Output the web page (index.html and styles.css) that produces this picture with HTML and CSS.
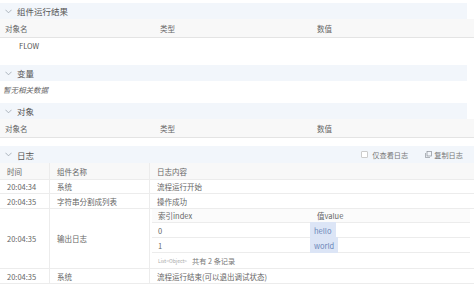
FILE: index.html
```html
<!DOCTYPE html>
<html lang="zh">
<head>
<meta charset="utf-8">
<link rel="stylesheet" href="styles.css">
</head>
<body>
<div class="panel">
  <div class="sec-head first">
    <svg class="chev" viewBox="0 0 8 5" width="7" height="5"><path d="M0.5 0.5 L4 4 L7.5 0.5" fill="none" stroke="#9aa3ad" stroke-width="0.9"/></svg>
    <span class="sec-title">组件运行结果</span>
  </div>
  <div class="otable">
    <div class="orow ohead"><span>对象名</span><span>类型</span><span>数值</span></div>
    <div class="orow obody"><span class="tree">FLOW</span><span></span><span></span></div>
  </div>

  <div class="sec-head s2">
    <svg class="chev" viewBox="0 0 8 5" width="7" height="5"><path d="M0.5 0.5 L4 4 L7.5 0.5" fill="none" stroke="#9aa3ad" stroke-width="0.9"/></svg>
    <span class="sec-title">变量</span>
  </div>
  <div class="empty">暂无相关数据</div>

  <div class="sec-head s3">
    <svg class="chev" viewBox="0 0 8 5" width="7" height="5"><path d="M0.5 0.5 L4 4 L7.5 0.5" fill="none" stroke="#9aa3ad" stroke-width="0.9"/></svg>
    <span class="sec-title">对象</span>
  </div>
  <div class="otable">
    <div class="orow ohead"><span>对象名</span><span>类型</span><span>数值</span></div>
  </div>

  <div class="sec-head s4">
    <svg class="chev" viewBox="0 0 8 5" width="7" height="5"><path d="M0.5 0.5 L4 4 L7.5 0.5" fill="none" stroke="#9aa3ad" stroke-width="0.9"/></svg>
    <span class="sec-title">日志</span>
    <span class="tools">
      <span class="tool"><span class="check"></span>仅查看日志</span>
      <span class="tool copy"><svg viewBox="0 0 8 8" width="7" height="7"><rect x="2.3" y="0.5" width="5.2" height="5.2" fill="none" stroke="#8a8f96" stroke-width="0.8"/><path d="M0.5 2.3 V7.5 H5.7" fill="none" stroke="#8a8f96" stroke-width="0.8"/></svg>复制日志</span>
    </span>
  </div>
  <div class="ltable">
    <div class="lrow lhead"><span>时间</span><span>组件名称</span><span>日志内容</span></div>
    <div class="lrow r1"><span>20:04:34</span><span>系统</span><span>流程运行开始</span></div>
    <div class="lrow r2"><span>20:04:35</span><span>字符串分割成列表</span><span>操作成功</span></div>
    <div class="lrow r3"><span class="mid">20:04:35</span><span class="mid">输出日志</span>
      <div class="nested">
        <div class="nrow nhead"><span>索引index</span><span>值value</span></div>
        <div class="nrow"><span>0</span><span><b class="val">hello</b></span></div>
        <div class="nrow"><span>1</span><span><b class="val">world</b></span></div>
        <div class="nfoot"><span class="type">List&lt;Object&gt;</span>共有 2 条记录</div>
      </div>
    </div>
    <div class="lrow r4"><span>20:04:35</span><span>系统</span><span>流程运行结束(可以退出调试状态)</span></div>
  </div>
</div>
</body>
</html>
```
FILE: styles.css
```css
html, body {
  margin: 0;
  padding: 0;
  background: #fff;
}
body {
  font-family: "Noto Sans CJK SC", "Noto Sans", sans-serif;
  color: #666;
  font-size: 7.5px;
  width: 474px;
  height: 284px;
  overflow: hidden;
}
.panel {
  display: flex;
  flex-direction: column;
}
.sec-head {
  height: 16px;
  background: #f2f6fb;
  margin-right: 7px;
  display: flex;
  align-items: center;
  padding-left: 5px;
  box-sizing: border-box;
}
.sec-head.first { margin-top: 3px; }
.sec-head.s2 { margin-top: 13px; }
.sec-head.s3 { margin-top: 3px; }
.sec-head.s4 { margin-top: 8px; height: 17px; margin-right: 0; }
.chev { margin-right: 5px; flex: none; }
.sec-title {
  font-size: 8.5px;
  color: #555;
}
.tools {
  margin-left: auto;
  display: flex;
  align-items: center;
  gap: 17px;
  margin-right: 11px;
  font-size: 7.2px;
  color: #777;
}
.tool { display: flex; align-items: center; }
.check {
  width: 5px;
  height: 5px;
  border: 0.8px solid #ccc;
  background: #fff;
  margin-right: 4px;
  border-radius: 1px;
}
.copy svg { margin-right: 2px; }

.otable { display: flex; flex-direction: column; }
.orow {
  display: grid;
  grid-template-columns: 155px 157px 1fr;
  align-items: center;
}
.orow span { padding-left: 5px; }
.ohead {
  height: 19px;
  background: #f8f8f8;
  border-bottom: 1px solid #e4e4e4;
  box-sizing: border-box;
  color: #666;
}
.obody { height: 14px; color: #555; }
.orow span.tree { padding-left: 19px; }

.empty {
  height: 19px;
  line-height: 17px;
  padding-left: 3px;
  font-style: italic;
  color: #666;
}

.ltable { display: flex; flex-direction: column; }
.lrow {
  display: grid;
  grid-template-columns: 50px 100px 1fr;
  border-bottom: 1px solid #ececec;
  box-sizing: border-box;
}
.lrow > span {
  padding-left: 7px;
  display: flex;
  align-items: center;
  border-right: 1px solid #ececec;
}
.lrow > span:last-child { border-right: none; }
.lhead { height: 17px; background: #f8f8f8; }
.r1 { height: 14px; }
.r2 { height: 15px; }
.r3 { height: 60px; }
.r4 { height: 15px; }
.r3 > .mid { border-right: 1px solid #ececec; }
.nested {
  display: flex;
  flex-direction: column;
  padding: 0 4px 0 2px;
}
.nrow {
  display: grid;
  grid-template-columns: 158px 1fr;
  height: 15px;
  border-bottom: 1px solid #ececec;
  box-sizing: border-box;
}
.nrow > span {
  display: flex;
  align-items: center;
  padding-left: 6px;
}
.nrow > span:last-child { padding-left: 0; }
.nhead { height: 14px; background: #fbfbfb; }
.nhead > span:last-child { padding-left: 7px; }
.val {
  font-weight: normal;
  align-self: stretch;
  display: flex;
  align-items: center;
  background: #dce5f6;
  color: #6b86b8;
  padding: 0 4px;
  margin-top: -1px;
  margin-bottom: -1px;
}
.nfoot {
  height: 15px;
  display: flex;
  align-items: center;
  padding-left: 6px;
  color: #777;
  font-size: 7.2px;
}
.nfoot .type {
  font-size: 5px;
  color: #aaa;
  margin-right: 5px;
}
```
